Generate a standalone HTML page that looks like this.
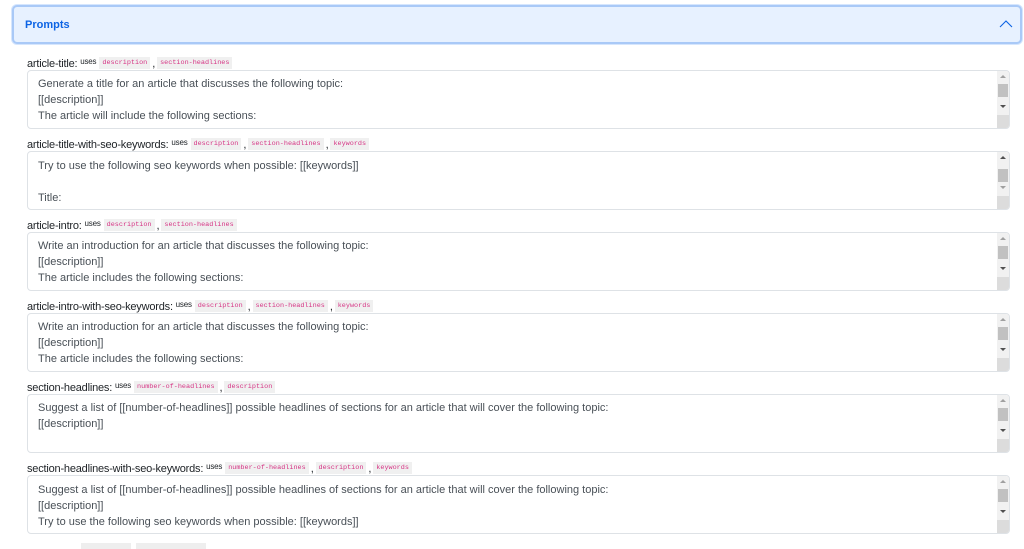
<!DOCTYPE html>
<html><head><meta charset="utf-8"><style>
body{margin:0;background:#fff;font-family:"Liberation Sans",sans-serif;width:1024px;height:546px;overflow:hidden;position:relative}
.hdr{position:absolute;left:12px;top:5px;width:1006px;height:35px;background:#e7f1ff;border:2px solid #a9c9f7;border-radius:5px;box-shadow:0 0 0 1px #d6e6fd}
.hdr span{position:absolute;left:11px;top:12px;font-size:11px;font-weight:bold;color:#0c63e4}
.hdr svg{position:absolute;right:7px;top:12px}
.lbl{position:absolute;left:27px;font-size:11px;color:#212529;white-space:nowrap;letter-spacing:-0.2px}
.lbl small{font-size:8px;vertical-align:3px;margin-right:1px}
.lbl code{font-family:"Liberation Mono",monospace;font-size:6.8px;color:#d63384;background:#f0f0f0;padding:2px 3px;vertical-align:3px;margin:0 2px;letter-spacing:0}
.ta{position:absolute;left:27px;width:981px;height:57px;border:1px solid #dee2e6;border-radius:4px;overflow:hidden;background:#fff}
.ta .t{position:absolute;left:10px;font-size:11px;line-height:16px;color:#495057;white-space:pre}
.sb{position:absolute;right:0;top:0;width:12px;height:57px;background:#f1f1f1}
.sb .th{position:absolute;left:1px;top:13px;width:10px;height:13px;background:#c1c1c1}
.sb .g{position:absolute;left:0;bottom:0;width:12px;height:13px;background:#dcdcdc}
.up{position:absolute;left:3px;top:4px;border-left:3px solid transparent;border-right:3px solid transparent;border-bottom:3px solid #505050}
.dn{position:absolute;left:3px;top:34px;border-left:3px solid transparent;border-right:3px solid transparent;border-top:3px solid #505050}
</style></head><body>
<div class="hdr"><span>Prompts</span><svg width="14" height="9" viewBox="0 0 14 9"><path d="M1 8L7 2L13 8" stroke="#0c63e4" stroke-width="1.1" fill="none"/></svg></div>

<div class="lbl" style="top:57px">article-title: <small>uses</small><code>description</code>,<code>section-headlines</code></div>
<div class="ta" style="top:70px"><div class="t" style="top:5px">Generate a title for an article that discusses the following topic:
[[description]]
The article will include the following sections:</div><div class="sb"><div class="up" style="border-bottom-color:#a0a0a0"></div><div class="th"></div><div class="dn"></div><div class="g"></div></div></div>

<div class="lbl" style="top:138px">article-title-with-seo-keywords: <small>uses</small><code>description</code>,<code>section-headlines</code>,<code>keywords</code></div>
<div class="ta" style="top:151px"><div class="t" style="top:6px">Try to use the following seo keywords when possible: [[keywords]]

Title:</div><div class="sb"><div class="up"></div><div class="th" style="top:17px"></div><div class="dn" style="border-top-color:#a0a0a0"></div><div class="g"></div></div></div>

<div class="lbl" style="top:219px">article-intro: <small>uses</small><code>description</code>,<code>section-headlines</code></div>
<div class="ta" style="top:232px"><div class="t" style="top:5px">Write an introduction for an article that discusses the following topic:
[[description]]
The article includes the following sections:</div><div class="sb"><div class="up" style="border-bottom-color:#a0a0a0"></div><div class="th"></div><div class="dn"></div><div class="g"></div></div></div>

<div class="lbl" style="top:300px">article-intro-with-seo-keywords: <small>uses</small><code>description</code>,<code>section-headlines</code>,<code>keywords</code></div>
<div class="ta" style="top:313px"><div class="t" style="top:5px">Write an introduction for an article that discusses the following topic:
[[description]]
The article includes the following sections:</div><div class="sb"><div class="up" style="border-bottom-color:#a0a0a0"></div><div class="th"></div><div class="dn"></div><div class="g"></div></div></div>

<div class="lbl" style="top:381px">section-headlines: <small>uses</small><code>number-of-headlines</code>,<code>description</code></div>
<div class="ta" style="top:394px"><div class="t" style="top:5px">Suggest a list of [[number-of-headlines]] possible headlines of sections for an article that will cover the following topic:
[[description]]</div><div class="sb"><div class="up" style="border-bottom-color:#a0a0a0"></div><div class="th"></div><div class="dn"></div><div class="g"></div></div></div>

<div class="lbl" style="top:462px">section-headlines-with-seo-keywords: <small>uses</small><code>number-of-headlines</code>,<code>description</code>,<code>keywords</code></div>
<div class="ta" style="top:475px"><div class="t" style="top:6px">Suggest a list of [[number-of-headlines]] possible headlines of sections for an article that will cover the following topic:
[[description]]
Try to use the following seo keywords when possible: [[keywords]]</div><div class="sb"><div class="up" style="border-bottom-color:#a0a0a0"></div><div class="th"></div><div class="dn"></div><div class="g"></div></div></div>

<div style="position:absolute;left:81px;top:543px;width:50px;height:6px;background:#eee"></div>
<div style="position:absolute;left:136px;top:543px;width:70px;height:6px;background:#eee"></div>
</body></html>
